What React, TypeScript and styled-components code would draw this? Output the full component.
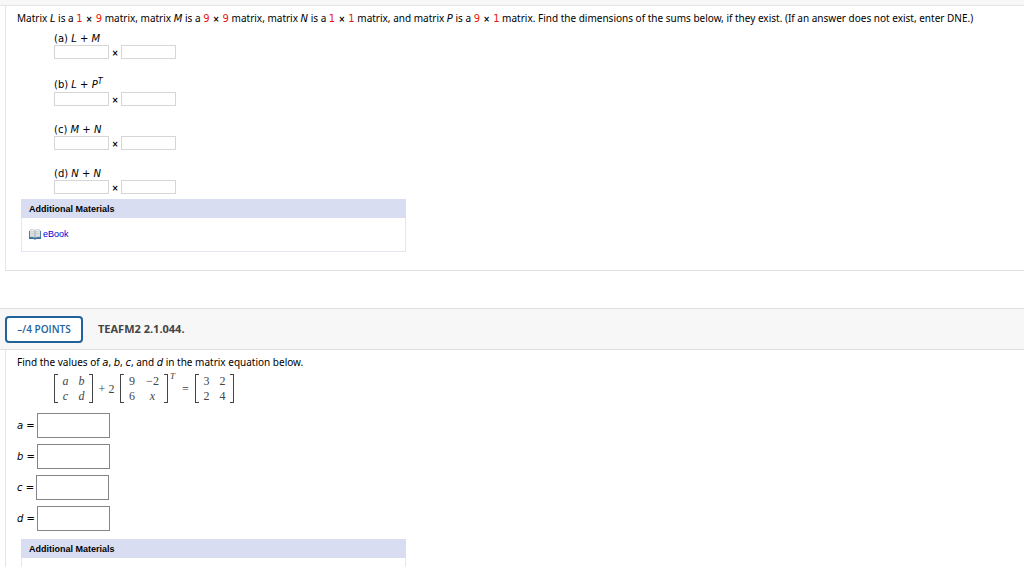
import React from "react";
import styled, { createGlobalStyle } from "styled-components";

const GlobalStyle = createGlobalStyle`
  *, *::before, *::after { box-sizing: border-box; }
  html, body, #root { height: 100%; }
  body {
    margin: 0;
    background: #fff;
    color: #000;
    font: 10px/14px "DejaVu Sans", Verdana, sans-serif;
  }
`;

const Page = styled.main`
  height: 100%;
  overflow: hidden;
`;

const PreviousHeader = styled.div`
  height: 6px;
  background: #f7f7f7;
  border-bottom: 1px solid #e4e4e4;
`;

const Question = styled.section`
  margin-left: 5px;
  padding: 5px 16px 0 11px;
  border-left: 1px solid #e4e4e4;
`;

const FirstQuestion = styled(Question)`
  padding-bottom: 18px;
  border-bottom: 1px solid #e0e0e0;
  margin-bottom: 37px;
`;

const Prompt = styled.p`
  margin: 0;
  font-family: "Noto Sans", Verdana, sans-serif;
`;

const Variable = styled.i`
  font-family: "DejaVu Sans", Verdana, sans-serif;
  line-height: 0;
`;

const SizeText = styled.span`
  font-family: "DejaVu Sans", Verdana, sans-serif;
  line-height: 0;
  white-space: nowrap;
`;

const SmallTimes = styled.span`
  font-size: 8px;
  font-weight: bold;
`;

const Given = styled.span`
  color: #e8170c;
`;

const Parts = styled.div`
  display: flex;
  flex-direction: column;
  gap: 17px;
  padding: 7px 0 5px 37px;
`;

const PartLabel = styled.div<{ $tall?: boolean }>`
  height: ${(p) => (p.$tall ? 16 : 13)}px;
  line-height: ${(p) => (p.$tall ? 18 : 13)}px;
`;

const Power = styled.sup`
  font-size: 8px;
  line-height: 0;
  vertical-align: 4px;
`;

const Dimensions = styled.div`
  display: flex;
  align-items: center;
  gap: 4px;
`;

const Times = styled.span`
  width: 4px;
  padding-top: 3px;
  font-size: 8px;
  line-height: 8px;
  font-weight: bold;
  display: flex;
  justify-content: center;
`;

const DimensionInput = styled.input`
  width: 55px;
  height: 14px;
  padding: 0 2px;
  border: 1px solid #d6d6d6;
  border-radius: 0;
  background: #fff;
  font: inherit;
`;

const Materials = styled.aside`
  width: 385px;
  margin-left: 4px;
  border: 1px solid #e2e5f4;
  border-top: 0;
  font-family: "Liberation Sans", Arial, sans-serif;
`;

const MaterialsTitle = styled.h3`
  margin: 0 -1px;
  padding: 1px 8px 0;
  background: #d8ddf2;
  font-size: 9px;
  line-height: 18px;
  font-weight: bold;
`;

const MaterialsBody = styled.div`
  display: flex;
  min-height: 33px;
  padding: 8px 7px 9px;
`;

const BookLink = styled.a`
  display: flex;
  align-items: center;
  gap: 2px;
  color: #0000d8;
  font-size: 9px;
  line-height: 16px;
  text-decoration: none;
`;

const QuestionHeader = styled.header`
  display: flex;
  align-items: center;
  gap: 15px;
  height: 42px;
  padding-left: 5px;
  background: #f7f7f7;
  border: solid #e0e0e0;
  border-width: 1px 0;
  font-family: "Open Sans", sans-serif;
`;

const PointsButton = styled.button`
  width: 78px;
  height: 27px;
  padding: 0;
  border: 2px solid #22629b;
  border-radius: 4px;
  background: #fff;
  color: #22629b;
  font: 600 10px/22px "Open Sans", sans-serif;
`;

const QuestionId = styled.h2`
  margin: 0;
  color: #444;
  font-size: 11px;
  line-height: 16px;
  font-weight: bold;
`;

const Equation = styled.div`
  display: flex;
  align-items: center;
  height: 29px;
  margin: 5px 0 10px 37px;
  color: #444;
  font: 12px/14px "Liberation Serif", "Times New Roman", serif;
`;

const MatrixBox = styled.div<{ $wide?: boolean }>`
  display: grid;
  grid-template-columns: ${(p) => (p.$wide ? "9px 16px" : "8px 8px")};
  column-gap: 8px;
  justify-content: center;
  justify-items: center;
  width: ${(p) => (p.$wide ? 48 : 39)}px;
  height: 29px;
  border: solid #444;
  border-width: 0 1px;
  background:
    linear-gradient(#444, #444) left top / 3px 1px,
    linear-gradient(#444, #444) left bottom / 3px 1px,
    linear-gradient(#444, #444) right top / 3px 1px,
    linear-gradient(#444, #444) right bottom / 3px 1px;
  background-repeat: no-repeat;
`;

const Operator = styled.span<{ $width: number }>`
  width: ${(p) => p.$width}px;
  text-align: center;
  white-space: nowrap;
`;

const Transpose = styled.i`
  align-self: flex-start;
  width: 8px;
  padding-left: 2px;
  font-size: 9px;
  line-height: 4px;
`;

const Unknowns = styled.div`
  display: flex;
  flex-direction: column;
  gap: 6px;
  margin-bottom: 8px;
`;

const Unknown = styled.label`
  display: flex;
  align-items: center;
  gap: 2px;
`;

const UnknownInput = styled.input`
  width: 73px;
  height: 25px;
  padding: 2px 4px;
  border: 1px solid #858585;
  border-radius: 0;
  background: #fff;
  font: inherit;
`;

function BookIcon() {
  return (
    <svg width="12" height="11" viewBox="0 0 12 11" aria-hidden="true">
      <path d="M0 2h12v8H7.500L6 10.800 4.500 10H0z" fill="#3a6f9f" />
      <path d="M1 .8q3-.8 5 .6Q8 0 11 .8v7.200q-3-.6-5 .8Q4 7.400 1 8z" fill="#eceeea" stroke="#9fb0bf" strokeWidth=".5" />
      <path d="M6 1.500v7.500" stroke="#6d8296" strokeWidth=".8" />
      <path d="M2.200 2.800h2.500M2.200 4.400h2.500M2.200 6h2.500M7.300 2.800h2.500M7.300 4.400h2.500M7.300 6h2.500" stroke="#b4bbbf" strokeWidth=".7" />
    </svg>
  );
}

function Part({ name, tall, children }: { name: string; tall?: boolean; children: React.ReactNode }) {
  return (
    <div role="group" aria-labelledby={`part-${name}`}>
      <PartLabel id={`part-${name}`} $tall={tall}>
        ({name}) {children}
      </PartLabel>
      <Dimensions>
        <DimensionInput aria-label={`Part ${name}, rows`} />
        <Times>×</Times>
        <DimensionInput aria-label={`Part ${name}, columns`} />
      </Dimensions>
    </div>
  );
}

function Size({ rows, columns }: { rows: number; columns: number }) {
  return (
    <SizeText>
      <Given>{rows}</Given> <SmallTimes>×</SmallTimes> <Given>{columns}</Given>
    </SizeText>
  );
}

function Matrix({ cells, wide }: { cells: React.ReactNode[]; wide?: boolean }) {
  return (
    <MatrixBox $wide={wide}>
      {cells.map((cell, i) => (
        <span key={i}>{cell}</span>
      ))}
    </MatrixBox>
  );
}

function AdditionalMaterials({ children }: { children?: React.ReactNode }) {
  return (
    <Materials>
      <MaterialsTitle>Additional Materials</MaterialsTitle>
      <MaterialsBody>{children}</MaterialsBody>
    </Materials>
  );
}

export default function App() {
  return (
    <>
      <GlobalStyle />
      <Page>
        <PreviousHeader />
        <FirstQuestion>
          <Prompt>
            Matrix <Variable>L</Variable> is a <Size rows={1} columns={9} /> matrix, matrix{" "}
            <Variable>M</Variable> is a <Size rows={9} columns={9} /> matrix, matrix <Variable>N</Variable> is
            a <Size rows={1} columns={1} /> matrix, and matrix <Variable>P</Variable> is a{" "}
            <Size rows={9} columns={1} /> matrix. Find the dimensions of the sums below, if they exist. (If an
            answer does not exist, enter DNE.)
          </Prompt>
          <Parts>
            <Part name="a"><i>L</i> + <i>M</i></Part>
            <Part name="b" tall><i>L</i> + <i>P<Power>T</Power></i></Part>
            <Part name="c"><i>M</i> + <i>N</i></Part>
            <Part name="d"><i>N</i> + <i>N</i></Part>
          </Parts>
          <AdditionalMaterials>
            <BookLink href="#ebook">
              <BookIcon />
              eBook
            </BookLink>
          </AdditionalMaterials>
        </FirstQuestion>

        <QuestionHeader>
          <PointsButton type="button">–/4 POINTS</PointsButton>
          <QuestionId>TEAFM2 2.1.044.</QuestionId>
        </QuestionHeader>
        <Question>
          <Prompt>
            Find the values of <Variable>a</Variable>, <Variable>b</Variable>, <Variable>c</Variable>, and{" "}
            <Variable>d</Variable> in the matrix equation below.
          </Prompt>
          <Equation>
            <Matrix cells={[<i>a</i>, <i>b</i>, <i>c</i>, <i>d</i>]} />
            <Operator $width={27}>+ 2</Operator>
            <Matrix wide cells={["9", "−2", "6", <i>x</i>]} />
            <Transpose>T</Transpose>
            <Operator $width={19}>=</Operator>
            <Matrix cells={["3", "2", "2", "4"]} />
          </Equation>
          <Unknowns>
            {["a", "b", "c", "d"].map((name) => (
              <Unknown key={name}>
                <span><i>{name}</i> =</span>
                <UnknownInput />
              </Unknown>
            ))}
          </Unknowns>
          <AdditionalMaterials />
        </Question>
      </Page>
    </>
  );
}
